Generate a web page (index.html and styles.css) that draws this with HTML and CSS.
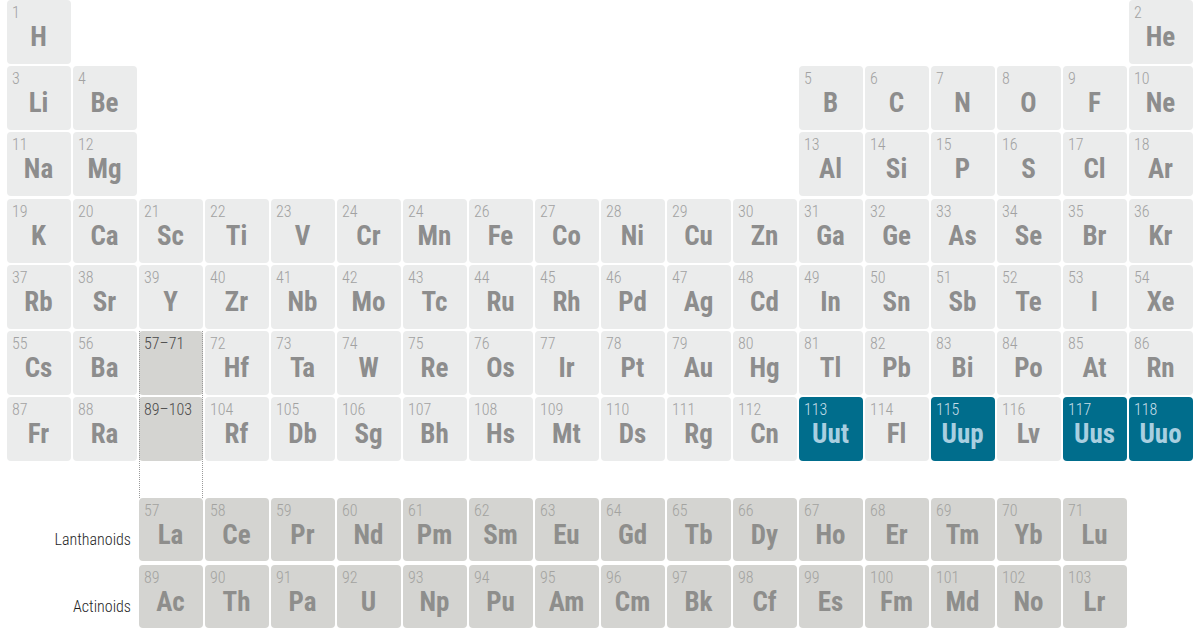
FILE: index.html
```html
<!DOCTYPE html>
<html lang="en">
<head>
<meta charset="utf-8">
<title>Periodic table</title>
<link rel="stylesheet" href="styles.css">
</head>
<body>
<div class="table">
  <div class="main">
    <div class="el"><span class="num">1</span><span class="sym">H</span></div>
    <div class="el to18"><span class="num">2</span><span class="sym">He</span></div>

    <div class="el"><span class="num">3</span><span class="sym">Li</span></div>
    <div class="el"><span class="num">4</span><span class="sym">Be</span></div>
    <div class="el to13"><span class="num">5</span><span class="sym">B</span></div>
    <div class="el"><span class="num">6</span><span class="sym">C</span></div>
    <div class="el"><span class="num">7</span><span class="sym">N</span></div>
    <div class="el"><span class="num">8</span><span class="sym">O</span></div>
    <div class="el"><span class="num">9</span><span class="sym">F</span></div>
    <div class="el"><span class="num">10</span><span class="sym">Ne</span></div>

    <div class="el"><span class="num">11</span><span class="sym">Na</span></div>
    <div class="el"><span class="num">12</span><span class="sym">Mg</span></div>
    <div class="el to13"><span class="num">13</span><span class="sym">Al</span></div>
    <div class="el"><span class="num">14</span><span class="sym">Si</span></div>
    <div class="el"><span class="num">15</span><span class="sym">P</span></div>
    <div class="el"><span class="num">16</span><span class="sym">S</span></div>
    <div class="el"><span class="num">17</span><span class="sym">Cl</span></div>
    <div class="el"><span class="num">18</span><span class="sym">Ar</span></div>

    <div class="el"><span class="num">19</span><span class="sym">K</span></div>
    <div class="el"><span class="num">20</span><span class="sym">Ca</span></div>
    <div class="el"><span class="num">21</span><span class="sym">Sc</span></div>
    <div class="el"><span class="num">22</span><span class="sym">Ti</span></div>
    <div class="el"><span class="num">23</span><span class="sym">V</span></div>
    <div class="el"><span class="num">24</span><span class="sym">Cr</span></div>
    <div class="el"><span class="num">24</span><span class="sym">Mn</span></div>
    <div class="el"><span class="num">26</span><span class="sym">Fe</span></div>
    <div class="el"><span class="num">27</span><span class="sym">Co</span></div>
    <div class="el"><span class="num">28</span><span class="sym">Ni</span></div>
    <div class="el"><span class="num">29</span><span class="sym">Cu</span></div>
    <div class="el"><span class="num">30</span><span class="sym">Zn</span></div>
    <div class="el"><span class="num">31</span><span class="sym">Ga</span></div>
    <div class="el"><span class="num">32</span><span class="sym">Ge</span></div>
    <div class="el"><span class="num">33</span><span class="sym">As</span></div>
    <div class="el"><span class="num">34</span><span class="sym">Se</span></div>
    <div class="el"><span class="num">35</span><span class="sym">Br</span></div>
    <div class="el"><span class="num">36</span><span class="sym">Kr</span></div>

    <div class="el"><span class="num">37</span><span class="sym">Rb</span></div>
    <div class="el"><span class="num">38</span><span class="sym">Sr</span></div>
    <div class="el"><span class="num">39</span><span class="sym">Y</span></div>
    <div class="el"><span class="num">40</span><span class="sym">Zr</span></div>
    <div class="el"><span class="num">41</span><span class="sym">Nb</span></div>
    <div class="el"><span class="num">42</span><span class="sym">Mo</span></div>
    <div class="el"><span class="num">43</span><span class="sym">Tc</span></div>
    <div class="el"><span class="num">44</span><span class="sym">Ru</span></div>
    <div class="el"><span class="num">45</span><span class="sym">Rh</span></div>
    <div class="el"><span class="num">46</span><span class="sym">Pd</span></div>
    <div class="el"><span class="num">47</span><span class="sym">Ag</span></div>
    <div class="el"><span class="num">48</span><span class="sym">Cd</span></div>
    <div class="el"><span class="num">49</span><span class="sym">In</span></div>
    <div class="el"><span class="num">50</span><span class="sym">Sn</span></div>
    <div class="el"><span class="num">51</span><span class="sym">Sb</span></div>
    <div class="el"><span class="num">52</span><span class="sym">Te</span></div>
    <div class="el"><span class="num">53</span><span class="sym">I</span></div>
    <div class="el"><span class="num">54</span><span class="sym">Xe</span></div>

    <div class="el"><span class="num">55</span><span class="sym">Cs</span></div>
    <div class="el"><span class="num">56</span><span class="sym">Ba</span></div>
    <div class="el ref"><span class="num">57–71</span></div>
    <div class="el"><span class="num">72</span><span class="sym">Hf</span></div>
    <div class="el"><span class="num">73</span><span class="sym">Ta</span></div>
    <div class="el"><span class="num">74</span><span class="sym">W</span></div>
    <div class="el"><span class="num">75</span><span class="sym">Re</span></div>
    <div class="el"><span class="num">76</span><span class="sym">Os</span></div>
    <div class="el"><span class="num">77</span><span class="sym">Ir</span></div>
    <div class="el"><span class="num">78</span><span class="sym">Pt</span></div>
    <div class="el"><span class="num">79</span><span class="sym">Au</span></div>
    <div class="el"><span class="num">80</span><span class="sym">Hg</span></div>
    <div class="el"><span class="num">81</span><span class="sym">Tl</span></div>
    <div class="el"><span class="num">82</span><span class="sym">Pb</span></div>
    <div class="el"><span class="num">83</span><span class="sym">Bi</span></div>
    <div class="el"><span class="num">84</span><span class="sym">Po</span></div>
    <div class="el"><span class="num">85</span><span class="sym">At</span></div>
    <div class="el"><span class="num">86</span><span class="sym">Rn</span></div>

    <div class="el"><span class="num">87</span><span class="sym">Fr</span></div>
    <div class="el"><span class="num">88</span><span class="sym">Ra</span></div>
    <div class="el ref"><span class="num">89–103</span></div>
    <div class="el"><span class="num">104</span><span class="sym">Rf</span></div>
    <div class="el"><span class="num">105</span><span class="sym">Db</span></div>
    <div class="el"><span class="num">106</span><span class="sym">Sg</span></div>
    <div class="el"><span class="num">107</span><span class="sym">Bh</span></div>
    <div class="el"><span class="num">108</span><span class="sym">Hs</span></div>
    <div class="el"><span class="num">109</span><span class="sym">Mt</span></div>
    <div class="el"><span class="num">110</span><span class="sym">Ds</span></div>
    <div class="el"><span class="num">111</span><span class="sym">Rg</span></div>
    <div class="el"><span class="num">112</span><span class="sym">Cn</span></div>
    <div class="el new"><span class="num">113</span><span class="sym">Uut</span></div>
    <div class="el"><span class="num">114</span><span class="sym">Fl</span></div>
    <div class="el new"><span class="num">115</span><span class="sym">Uup</span></div>
    <div class="el"><span class="num">116</span><span class="sym">Lv</span></div>
    <div class="el new"><span class="num">117</span><span class="sym">Uus</span></div>
    <div class="el new"><span class="num">118</span><span class="sym">Uuo</span></div>

    <div class="guide"></div>
  </div>

  <div class="fblock">
    <div class="label">Lanthanoids</div>
    <div class="el f"><span class="num">57</span><span class="sym">La</span></div>
    <div class="el f"><span class="num">58</span><span class="sym">Ce</span></div>
    <div class="el f"><span class="num">59</span><span class="sym">Pr</span></div>
    <div class="el f"><span class="num">60</span><span class="sym">Nd</span></div>
    <div class="el f"><span class="num">61</span><span class="sym">Pm</span></div>
    <div class="el f"><span class="num">62</span><span class="sym">Sm</span></div>
    <div class="el f"><span class="num">63</span><span class="sym">Eu</span></div>
    <div class="el f"><span class="num">64</span><span class="sym">Gd</span></div>
    <div class="el f"><span class="num">65</span><span class="sym">Tb</span></div>
    <div class="el f"><span class="num">66</span><span class="sym">Dy</span></div>
    <div class="el f"><span class="num">67</span><span class="sym">Ho</span></div>
    <div class="el f"><span class="num">68</span><span class="sym">Er</span></div>
    <div class="el f"><span class="num">69</span><span class="sym">Tm</span></div>
    <div class="el f"><span class="num">70</span><span class="sym">Yb</span></div>
    <div class="el f"><span class="num">71</span><span class="sym">Lu</span></div>

    <div class="label">Actinoids</div>
    <div class="el f"><span class="num">89</span><span class="sym">Ac</span></div>
    <div class="el f"><span class="num">90</span><span class="sym">Th</span></div>
    <div class="el f"><span class="num">91</span><span class="sym">Pa</span></div>
    <div class="el f"><span class="num">92</span><span class="sym">U</span></div>
    <div class="el f"><span class="num">93</span><span class="sym">Np</span></div>
    <div class="el f"><span class="num">94</span><span class="sym">Pu</span></div>
    <div class="el f"><span class="num">95</span><span class="sym">Am</span></div>
    <div class="el f"><span class="num">96</span><span class="sym">Cm</span></div>
    <div class="el f"><span class="num">97</span><span class="sym">Bk</span></div>
    <div class="el f"><span class="num">98</span><span class="sym">Cf</span></div>
    <div class="el f"><span class="num">99</span><span class="sym">Es</span></div>
    <div class="el f"><span class="num">100</span><span class="sym">Fm</span></div>
    <div class="el f"><span class="num">101</span><span class="sym">Md</span></div>
    <div class="el f"><span class="num">102</span><span class="sym">No</span></div>
    <div class="el f"><span class="num">103</span><span class="sym">Lr</span></div>
  </div>
</div>
</body>
</html>
```
FILE: styles.css
```css
* { box-sizing: border-box; }
html, body { margin: 0; padding: 0; background: #fff; }
body {
  font-family: Roboto, "Liberation Sans", sans-serif;
  font-stretch: condensed;
}
.table { padding: 0 7px; width: 1200px; height: 630px; overflow: hidden; }
.main {
  position: relative;
  display: grid;
  grid-template-columns: repeat(18, 64px);
  grid-auto-rows: 64px;
  column-gap: 2px;
  row-gap: 2.2px;
}
.to13 { grid-column-start: 13; }
.to18 { grid-column-start: 18; }

.el {
  display: flex;
  flex-direction: column;
  background: #ebecec;
  border-radius: 4px;
  padding: 5px 0 0 5px;
}
.num {
  font-size: 16px;
  line-height: 16px;
  font-weight: 300;
  color: #a2a2a2;
}
.sym {
  margin-top: 3px;
  margin-left: -6px;
  text-align: center;
  font-size: 27px;
  line-height: 27px;
  font-weight: 700;
  color: #8d8d8d;
}
.new { background: #006d8c; }
.new .num { color: #c6dee8; }
.new .sym { color: #a9cfe0; }
.ref { background: #d4d4d1; }
.ref .num { color: #4a4a4a; font-weight: 300; }

.guide {
  position: absolute;
  left: 132px;
  top: 331px;
  width: 64px;
  height: 167px;
  border-left: 1px dotted #9a9a9a;
  border-right: 1px dotted #9a9a9a;
  pointer-events: none;
}

.fblock {
  margin-top: 37px;
  display: grid;
  grid-template-columns: 130px repeat(15, 64px);
  grid-auto-rows: 63px;
  column-gap: 2px;
  row-gap: 4px;
}
.f { background: #d4d4d1; }
.f .num { color: #a3a3a0; }
.f .sym { color: #8e8e8c; }
.label {
  align-self: end;
  text-align: right;
  padding: 0 6px 12px 0;
  font-size: 16px;
  line-height: 18px;
  font-weight: 300;
  color: #1e1e1e;
}
```
